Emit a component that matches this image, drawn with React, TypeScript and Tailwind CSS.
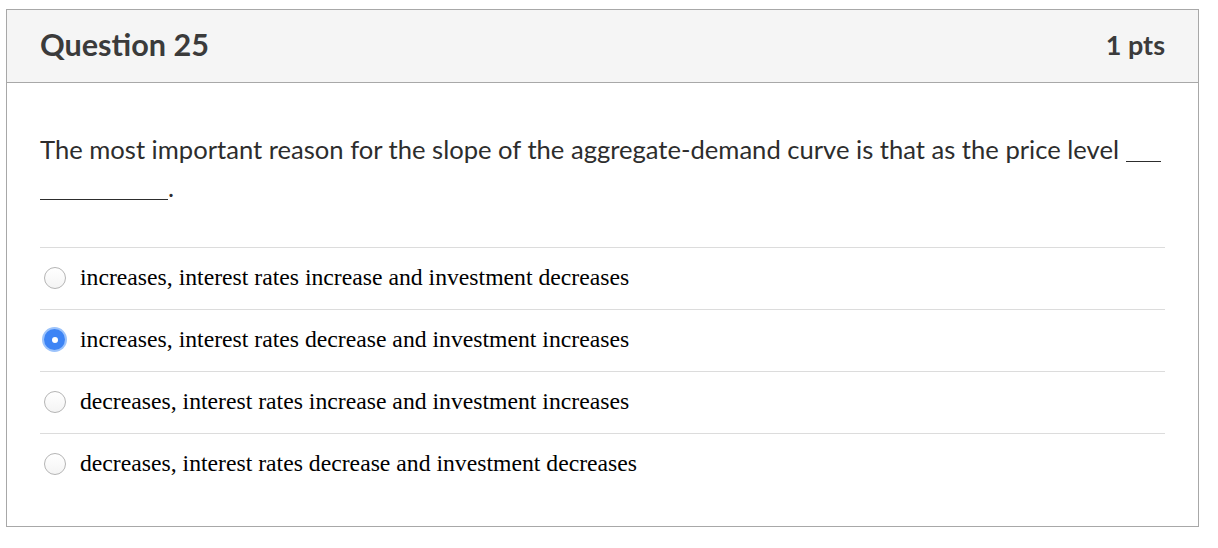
const options = [
  "increases, interest rates increase and investment decreases",
  "increases, interest rates decrease and investment increases",
  "decreases, interest rates increase and investment increases",
  "decreases, interest rates decrease and investment decreases",
];

function Radio({ checked }: { checked: boolean }) {
  if (checked) {
    return (
      <span className="flex size-[25px] shrink-0 items-center justify-center rounded-full bg-[#9cc3fb]">
        <span className="flex size-[21px] items-center justify-center rounded-full bg-[#3d84f5]">
          <span className="size-[6px] rounded-full bg-white" />
        </span>
      </span>
    );
  }
  return (
    <span className="flex size-[25px] shrink-0 items-center justify-center">
      <span className="size-[22px] rounded-full border border-[#b5b5b5] bg-gradient-to-b from-white to-[#f4f4f4]" />
    </span>
  );
}

function Blank({ w }: { w: string }) {
  return <span className={`inline-block ${w} mb-[-3px] border-b-[1.5px] border-[#2d2d2d]`} />;
}

export default function App() {
  const selected = 1;
  return (
    <div className="h-[548px] w-[1218px] bg-white pl-[6px] pt-[9px]" style={{ fontFamily: "Lato, 'Liberation Sans', sans-serif" }}>
      <div className="flex h-[518px] w-[1193px] flex-col border border-[#a8a8a8]">
        <div className="flex h-[73px] items-center justify-between border-b border-[#a8a8a8] bg-[#f5f5f5] px-[33px] pb-[2px] text-[#3b3b3b]">
          <span className="text-[30.6px] font-bold">Question 25</span>
          <span className="text-[27px] font-bold">1 pts</span>
        </div>
        <div className="px-[33px] pt-[47px]">
          <p className="text-[25.6px] leading-[38px] text-[#2d2d2d]">
            The most important reason for the slope of the aggregate-demand curve is that as the price level{" "}
            <Blank w="w-[35px]" />
            <br />
            <Blank w="w-[128px]" />.
          </p>
          <div className="mt-[41px]">
            {options.map((text, i) => (
              <div key={text} className="flex h-[62px] items-center gap-[13px] border-t border-[#dcdcdc] pb-[2px] pl-[2px]">
                <Radio checked={i === selected} />
                <span className="text-[23.7px] text-black" style={{ fontFamily: "'Liberation Serif', serif" }}>{text}</span>
              </div>
            ))}
          </div>
        </div>
      </div>
    </div>
  );
}
